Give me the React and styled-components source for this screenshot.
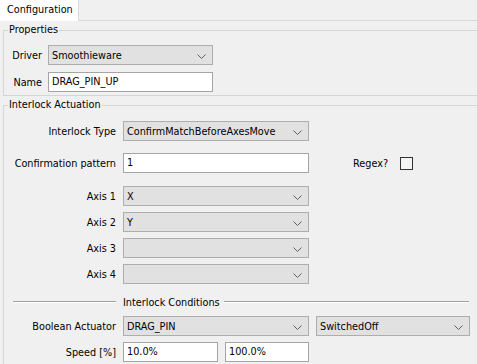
import React from 'react';
import styled, { createGlobalStyle } from 'styled-components';

const Global = createGlobalStyle`
  html, body { margin: 0; padding: 0; background: #f0f0f0; overflow: hidden; }
  body { font-family: "DejaVu Sans", "Liberation Sans", sans-serif; font-size: 9.7px; color: #000; }
  * { box-sizing: border-box; }
`;

const Page = styled.div`
  width: 100%;
  height: 364px;
  overflow: hidden;
`;

const TabStrip = styled.div`
  display: flex;
  height: 21px;
  border-bottom: 1px solid #d9d9d9;
`;

const Tab = styled.div`
  height: 21px;
  line-height: 20px;
  padding: 0 5px 0 7px;
  background: #fff;
  border-right: 1px solid #d9d9d9;
`;

const Content = styled.div`
  padding: 3px 0 0 3px;
`;

const Group = styled.fieldset`
  margin: ${p => p.$mt || 0}px 0 0 0;
  padding: ${p => p.$pt}px 0 ${p => p.$pb}px 4px;
  border: 1px solid #d5d5d5;
  border-right: none;
  min-inline-size: auto;
`;

const Legend = styled.legend`
  padding: 0 1px;
  line-height: 12px;
`;

const PropGrid = styled.div`
  display: grid;
  grid-template-columns: 34px 165px;
  column-gap: 6px;
  row-gap: 7px;
`;

const FormRow = styled.div`
  display: grid;
  grid-template-columns: 108px 95px 84px 154px;
  column-gap: 7px;
  margin-top: ${p => p.$mt || 0}px;
  height: ${p => p.$h || 20}px;
`;

const Label = styled.span`
  justify-self: end;
  align-self: center;
  white-space: nowrap;
`;

const ComboBox = styled.div`
  grid-column: span ${p => p.$span || 1};
  display: flex;
  align-items: center;
  height: 20px;
  padding: 0 6px 0 3px;
  background: #e1e1e1;
  border: 1px solid #adadad;
  white-space: nowrap;
`;

const ComboText = styled.span`
  flex: 1;
`;

const Chevron = styled.svg`
  margin-top: 2px;
  flex: none;
`;

const TextField = styled.div`
  grid-column: span ${p => p.$span || 1};
  height: 20px;
  line-height: 18px;
  padding: 0 3px;
  background: #fff;
  border: 1px solid #a5a5a5;
  white-space: nowrap;
  overflow: hidden;
`;

const RegexCell = styled.div`
  display: flex;
  align-items: center;
  padding-left: 37px;
`;

const RegexLabel = styled.span`
  width: 47px;
`;

const Checkbox = styled.span`
  width: 13px;
  height: 13px;
  border: 1px solid #333;
  background: #f4f4f4;
`;

const Line = styled.div`
  align-self: center;
  height: 2px;
  border-top: 1px solid #a0a0a0;
  border-bottom: 1px solid #fff;
  margin-left: ${p => p.$ml || 0}px;
  flex: 1;
`;

const SepTitle = styled.div`
  grid-column: span 3;
  display: flex;
  align-items: center;
  gap: 4px;
  white-space: nowrap;
  margin-right: 1px;
`;

function Combo({ value, span }) {
  return (
    <ComboBox $span={span}>
      <ComboText>{value}</ComboText>
      <Chevron width="9" height="5" viewBox="0 0 9 5">
        <polyline points="0.5,0.5 4.5,4.5 8.5,0.5" fill="none" stroke="#606060" strokeWidth="1" />
      </Chevron>
    </ComboBox>
  );
}

export default function App() {
  return (
    <Page>
      <Global />
      <TabStrip>
        <Tab>Configuration</Tab>
      </TabStrip>
      <Content>
        <Group $pt={9} $pb={3}>
          <Legend>Properties</Legend>
          <PropGrid>
            <Label>Driver</Label>
            <Combo value="Smoothieware" />
            <Label>Name</Label>
            <TextField>DRAG_PIN_UP</TextField>
          </PropGrid>
        </Group>
        <Group $mt={3} $pt={10} $pb={20}>
          <Legend>Interlock Actuation</Legend>
          <FormRow>
            <Label>Interlock Type</Label>
            <Combo span={2} value="ConfirmMatchBeforeAxesMove" />
          </FormRow>
          <FormRow $mt={12}>
            <Label>Confirmation pattern</Label>
            <TextField $span={2}>1</TextField>
            <RegexCell>
              <RegexLabel>Regex?</RegexLabel>
              <Checkbox />
            </RegexCell>
          </FormRow>
          <FormRow $mt={13}>
            <Label>Axis 1</Label>
            <Combo span={2} value="X" />
          </FormRow>
          <FormRow $mt={6}>
            <Label>Axis 2</Label>
            <Combo span={2} value="Y" />
          </FormRow>
          <FormRow $mt={6}>
            <Label>Axis 3</Label>
            <Combo span={2} value="" />
          </FormRow>
          <FormRow $mt={6}>
            <Label>Axis 4</Label>
            <Combo span={2} value="" />
          </FormRow>
          <FormRow $mt={11} $h={14}>
            <Line $ml={5} />
            <SepTitle>
              Interlock Conditions
              <Line />
            </SepTitle>
          </FormRow>
          <FormRow $mt={7}>
            <Label>Boolean Actuator</Label>
            <Combo span={2} value="DRAG_PIN" />
            <Combo value="SwitchedOff" />
          </FormRow>
          <FormRow $mt={6}>
            <Label>Speed [%]</Label>
            <TextField>10.0%</TextField>
            <TextField>100.0%</TextField>
          </FormRow>
        </Group>
      </Content>
    </Page>
  );
}
